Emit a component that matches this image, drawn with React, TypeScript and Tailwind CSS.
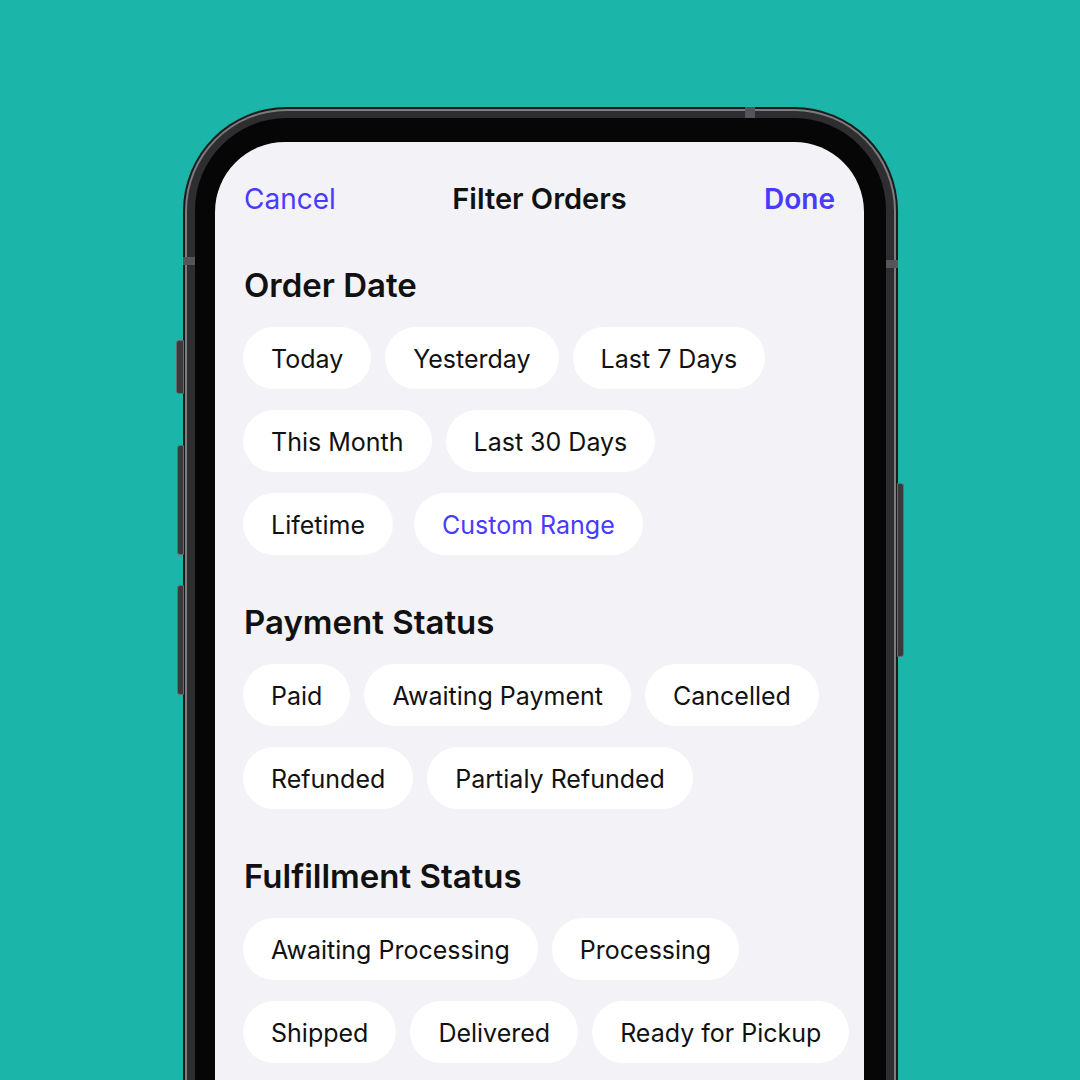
import React from "react";

const BLUE = "text-[#4a3aff]";

const sections: { title: string; rows: { label: string; active?: boolean; extra?: boolean }[][] }[] = [
  {
    title: "Order Date",
    rows: [
      [{ label: "Today" }, { label: "Yesterday" }, { label: "Last 7 Days" }],
      [{ label: "This Month" }, { label: "Last 30 Days" }],
      [{ label: "Lifetime" }, { label: "Custom Range", active: true, extra: true }],
    ],
  },
  {
    title: "Payment Status",
    rows: [
      [{ label: "Paid" }, { label: "Awaiting Payment" }, { label: "Cancelled" }],
      [{ label: "Refunded" }, { label: "Partialy Refunded" }],
    ],
  },
  {
    title: "Fulfillment Status",
    rows: [
      [{ label: "Awaiting Processing" }, { label: "Processing" }],
      [{ label: "Shipped" }, { label: "Delivered" }, { label: "Ready for Pickup" }],
    ],
  },
];

function Chip({ label, active, extra }: { label: string; active?: boolean; extra?: boolean }) {
  return (
    <div
      className={`h-[62px] px-[28px] pt-[4px] flex items-center rounded-full bg-white text-[25px] whitespace-nowrap ${
        active ? BLUE : "text-[#111]"
      } ${extra ? "ml-[7px]" : ""}`}
    >
      {label}
    </div>
  );
}

function Screen() {
  return (
    <div className="w-full h-full rounded-[70px] bg-[#f2f2f7] overflow-hidden">
      <div className="h-[114px] px-[29px] grid grid-cols-3 items-center text-[28px]">
        <span className={BLUE}>Cancel</span>
        <span className="text-center text-[29px] font-semibold text-[#111] whitespace-nowrap">Filter Orders</span>
        <span className={`text-right font-semibold ${BLUE}`}>Done</span>
      </div>
      <div className="pt-[10px] pl-[28px] flex flex-col gap-[48px]">
        {sections.map((s) => (
          <div key={s.title} className="flex flex-col gap-[21px]">
            <div className="h-[40px] flex items-center text-[33px] font-semibold text-[#111] pl-[1px]">
              {s.title}
            </div>
            {s.rows.map((row, i) => (
              <div key={i} className="flex gap-[14px]">
                {row.map((c) => (
                  <Chip key={c.label} {...c} />
                ))}
              </div>
            ))}
          </div>
        ))}
      </div>
    </div>
  );
}

function Phone() {
  return (
    <div className="relative w-[715px] h-[1100px]">
      {/* side buttons */}
      <div className="absolute left-[-7px] top-[233px] w-[8px] h-[54px] rounded-l-[3px] bg-[#3a3a3c] border border-[#6a6a6c]" />
      <div className="absolute left-[-6px] top-[338px] w-[7px] h-[110px] rounded-l-[3px] bg-[#3a3a3c] border border-[#6a6a6c]" />
      <div className="absolute left-[-6px] top-[478px] w-[7px] h-[110px] rounded-l-[3px] bg-[#3a3a3c] border border-[#6a6a6c]" />
      <div className="absolute right-[-6px] top-[376px] w-[7px] h-[174px] rounded-r-[3px] bg-[#3a3a3c] border border-[#6a6a6c]" />

      <div className="w-full h-full rounded-[104px] bg-[#1a1a1c] p-[2px]">
        <div className="w-full h-full rounded-[102px] bg-[#7c7c80] p-[2px]">
          <div className="relative w-full h-full rounded-[100px] bg-[#2e2e31] pt-[7px] px-[8px]">
            {/* antenna bands */}
            <div className="absolute top-[-4px] left-[558px] w-[10px] h-[11px] bg-[#55555a]" />
            <div className="absolute left-[-4px] top-[146px] w-[12px] h-[8px] bg-[#55555a]" />
            <div className="absolute right-[-4px] top-[149px] w-[12px] h-[8px] bg-[#55555a]" />
            <div className="w-full h-full rounded-[92px] bg-[#060606] pt-[24px] pl-[20px] pr-[22px]">
              <Screen />
            </div>
          </div>
        </div>
      </div>
    </div>
  );
}

export default function App() {
  return (
    <div
      className="w-[1080px] h-[1080px] overflow-hidden bg-[#1cb5a9] pt-[107px] pl-[183px]"
      style={{ fontFamily: "Inter, 'Liberation Sans', sans-serif" }}
    >
      <Phone />
    </div>
  );
}
